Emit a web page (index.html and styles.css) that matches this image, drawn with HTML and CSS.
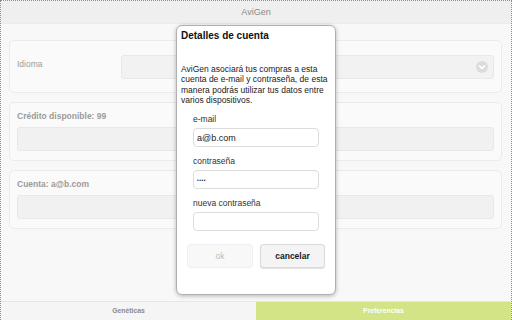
FILE: index.html
```html
<!DOCTYPE html>
<html lang="es">
<head>
    <meta charset="UTF-8">
    <meta name="viewport" content="width=device-width, initial-scale=1.0">
    <title>AviGen - Preferencias</title>
    <link rel="stylesheet" href="styles.css">
</head>
<body>
    <div class="screen">
        <div class="topbar">AviGen</div>

        <div class="content">
            <div class="card card-row">
                <span class="card-label">Idioma</span>
                <div class="select-box">
                    <svg class="chevron" width="12" height="12" viewBox="0 0 12 12">
                        <circle cx="6" cy="6" r="6" fill="#dcdcdc"/>
                        <path d="M3.4 4.9 L6 7.4 L8.6 4.9" fill="none" stroke="#fff" stroke-width="1.6" stroke-linecap="round" stroke-linejoin="round"/>
                    </svg>
                </div>
            </div>

            <div class="card">
                <div class="card-label bold">Crédito disponible: 99</div>
                <div class="field-box"></div>
            </div>

            <div class="card">
                <div class="card-label bold">Cuenta: a@b.com</div>
                <div class="field-box"></div>
            </div>
        </div>

        <div class="tabs">
            <div class="tab">Genéticas</div>
            <div class="tab active">Preferencias</div>
        </div>

        <div class="dialog">
            <h2>Detalles de cuenta</h2>
            <p class="desc">AviGen asociará tus compras a esta cuenta de e-mail y contraseña, de esta manera podrás utilizar tus datos entre varios dispositivos.</p>

            <div class="fields">
                <label for="email">e-mail</label>
                <input type="text" id="email" value="a@b.com">

                <label for="pass">contraseña</label>
                <input type="password" id="pass" class="pass" value="abcd">

                <label for="newpass">nueva contraseña</label>
                <input type="password" id="newpass" class="pass">
            </div>

            <div class="buttons">
                <button class="btn-ok" disabled>ok</button>
                <button class="btn-cancel">cancelar</button>
            </div>
        </div>
    </div>
</body>
</html>
```

FILE: styles.css
```css
* {
    box-sizing: border-box;
}
body {
    margin: 0;
    font-family: 'Liberation Sans', Arial, sans-serif;
    background: #f7f7f7;
}
.screen {
    position: relative;
    width: 512px;
    height: 320px;
    border: 1px dotted #8a8a8a;
    border-bottom: none;
    display: flex;
    flex-direction: column;
    background: #f8f8f8;
}
.topbar {
    height: 23px;
    background: #efefef;
    border-bottom: 1px solid #ebebeb;
    color: #8a8a8a;
    font-size: 9px;
    line-height: 22px;
    text-align: center;
}
.content {
    flex: 1;
    padding: 16px 9px 0 8px;
    display: flex;
    flex-direction: column;
    gap: 9px;
}
.card {
    background: #fafafa;
    border: 1px solid #ebebeb;
    border-radius: 5px;
    padding: 7px 7px 9px;
}
.card-row {
    display: flex;
    align-items: flex-start;
    padding: 14px 7px 13px;
}
.card-label {
    color: #9a9a9a;
    font-size: 8.5px;
    line-height: 12px;
}
.card-row .card-label {
    width: 104px;
    margin-top: 3px;
}
.bold {
    font-weight: bold;
}
.select-box {
    flex: 1;
    height: 24px;
    background: #f2f2f2;
    border: 1px solid #e8e8e8;
    border-radius: 3px;
    display: flex;
    align-items: center;
    justify-content: flex-end;
    padding-right: 5px;
}
.field-box {
    height: 24px;
    margin-top: 5px;
    background: #f1f1f1;
    border: 1px solid #e8e8e8;
    border-radius: 3px;
}
.tabs {
    height: 19px;
    display: flex;
    border-top: 1px solid #e6e6e6;
}
.tab {
    flex: 1;
    background: #f5f5f5;
    color: #8a8a8a;
    font-size: 6.8px;
    font-weight: bold;
    line-height: 18px;
    text-align: center;
}
.tab.active {
    background: #d2e486;
    color: #ffffff;
}
.dialog {
    position: absolute;
    left: 175px;
    top: 24px;
    width: 160px;
    height: 270px;
    background: #ffffff;
    border: 1px solid #b0b0b0;
    border-radius: 6px;
    box-shadow: 0 1px 4px rgba(0, 0, 0, 0.28);
    padding: 4px 4px 0;
}
.dialog h2 {
    margin: 0;
    font-size: 10px;
    line-height: 12px;
    color: #111;
}
.desc {
    margin: 22px 0 0;
    font-size: 8.5px;
    line-height: 10.3px;
    color: #222;
}
.fields {
    padding: 9px 0 0 12px;
}
.fields label {
    display: block;
    font-size: 8.5px;
    line-height: 10px;
    color: #333;
    margin-bottom: 4px;
}
.fields input {
    display: block;
    width: 126px;
    height: 19px;
    margin: 0 0 9px;
    padding: 0 3px;
    border: 1px solid #dcdcdc;
    border-radius: 4px;
    font-family: 'Liberation Sans', Arial, sans-serif;
    font-size: 9px;
    color: #222;
    background: #fff;
    outline: none;
}
.fields .pass {
    font-size: 5px;
    letter-spacing: 0.5px;
}
.buttons {
    display: flex;
    gap: 7px;
    padding: 4px 0 0 6px;
}
.buttons button {
    height: 24px;
    border-radius: 3px;
    font-family: 'Liberation Sans', Arial, sans-serif;
    font-size: 8.5px;
    padding: 0;
}
.btn-ok {
    width: 66px;
    background: #f8f8f8;
    border: 1px solid #f0f0f0;
    color: #bcbcbc;
}
.btn-cancel {
    width: 65px;
    background: #f4f4f4;
    border: 1px solid #dadada;
    box-shadow: 0 1px 1px rgba(0, 0, 0, 0.12);
    color: #1a1a1a;
    font-weight: bold;
}
```
